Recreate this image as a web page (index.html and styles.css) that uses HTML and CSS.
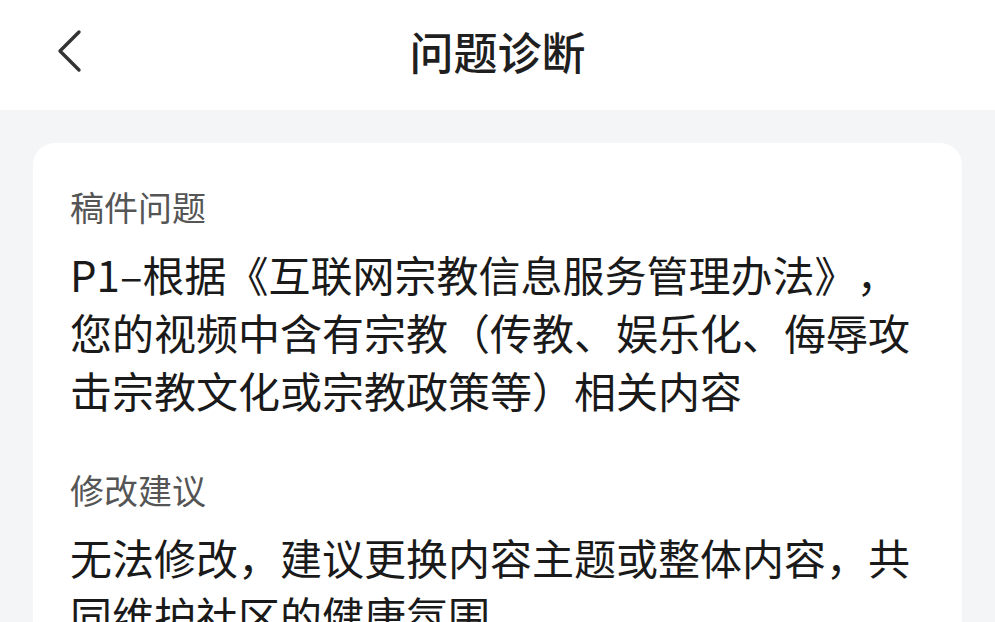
FILE: index.html
```html
<!DOCTYPE html>
<html lang="zh-CN">
<head>
<meta charset="utf-8">
<title>问题诊断</title>
<link rel="stylesheet" href="styles.css">
</head>
<body>
<header class="nav">
  <div class="nav-left">
    <svg class="back" width="28" height="44" viewBox="0 0 28 44" aria-hidden="true">
      <path d="M22 3 L3 22 L22 41" fill="none" stroke="#333" stroke-width="3.4" stroke-linecap="round" stroke-linejoin="round"/>
    </svg>
  </div>
  <h1 class="title">问题诊断</h1>
  <div class="nav-right"></div>
</header>
<main class="page">
  <section class="card">
    <div class="label">稿件问题</div>
    <p class="text">P1–根据《互联网宗教信息服务管理办法》，您的视频中含有宗教（传教、娱乐化、侮辱攻击宗教文化或宗教政策等）相关内容</p>
    <div class="label label-gap">修改建议</div>
    <p class="text">无法修改，建议更换内容主题或整体内容，共同维护社区的健康氛围</p>
  </section>
</main>
</body>
</html>
```
FILE: styles.css
```css
html, body {
  margin: 0;
  padding: 0;
}
body {
  width: 995px;
  height: 622px;
  overflow: hidden;
  background: #f4f5f7;
  font-family: "Noto Sans CJK SC", "Noto Sans", sans-serif;
  color: #1c1c1c;
  text-spacing-trim: space-all;
}
.nav {
  height: 110px;
  background: #ffffff;
  display: grid;
  grid-template-columns: 1fr auto 1fr;
  align-items: center;
}
.nav-left {
  padding-left: 57px;
  display: flex;
  align-items: center;
  padding-bottom: 8px;
}
.back {
  display: block;
}
.title {
  margin: 0;
  font-size: 44px;
  font-weight: 500;
  color: #1f1f1f;
  line-height: 60px;
  padding-bottom: 8px;
}
.page {
  padding: 33px 33px 0;
}
.card {
  background: #ffffff;
  border-radius: 22px;
  padding: 40px 37px 40px;
}
.label {
  font-size: 34px;
  line-height: 48px;
  color: #555555;
}
.label-gap {
  margin-top: 47px;
}
.text {
  margin: 14px 0 0;
  font-size: 42px;
  line-height: 58px;
  color: #1a1a1a;
  text-spacing-trim: space-all;
}
```
